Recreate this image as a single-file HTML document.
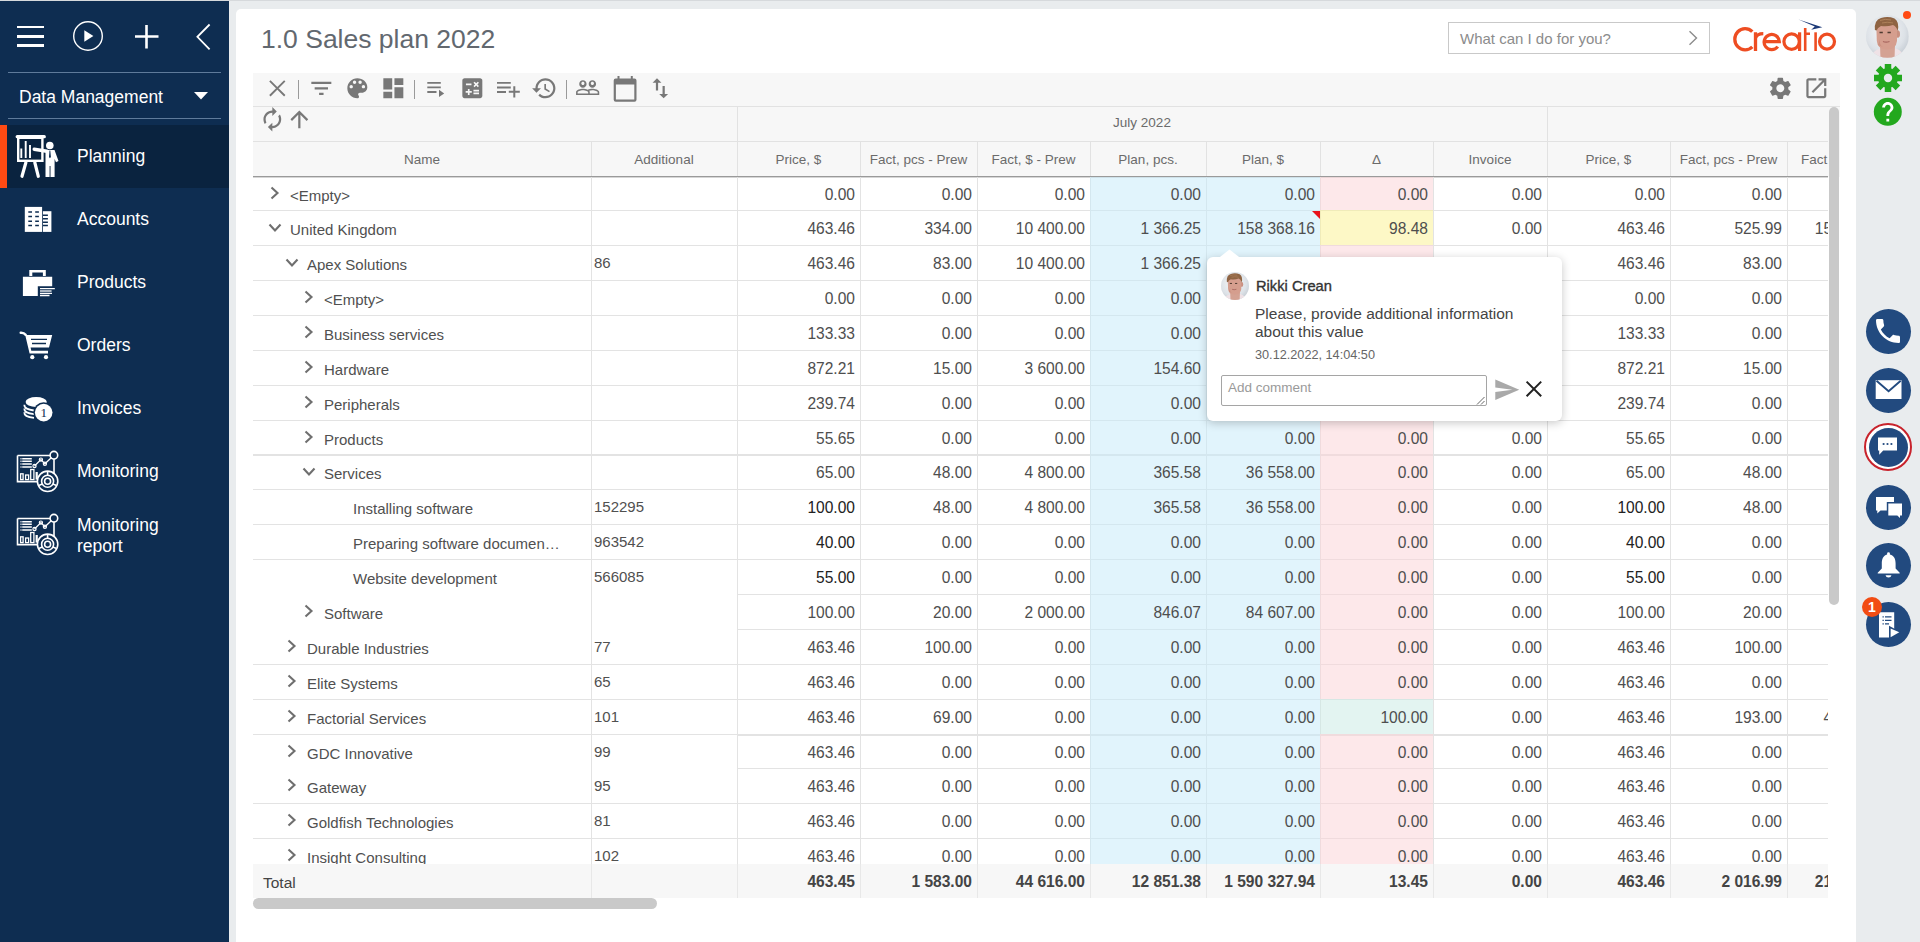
<!DOCTYPE html><html><head><meta charset="utf-8"><style>
*{box-sizing:border-box}
html,body{margin:0;padding:0;width:1920px;height:942px;overflow:hidden;background:#e9ecee;font-family:'Liberation Sans',sans-serif;}
.a{position:absolute}
.t{position:absolute;white-space:nowrap}
#sb{position:absolute;left:0;top:1px;width:229px;height:941px;background:#0e2d51}
.mi{position:absolute;left:77px;color:#fff;font-size:17.5px;white-space:nowrap}
.num{position:absolute;white-space:nowrap;text-align:right;font-size:17px;color:#4e4e4e;transform:scaleX(0.915);transform-origin:100% 50%}
.nm{position:absolute;white-space:nowrap;font-size:15px;color:#505050}
.hd{position:absolute;white-space:nowrap;text-align:center;font-size:13.5px;color:#6b6b6b}
.vl{position:absolute;width:1px;background:#e3e3e3}
.hl{position:absolute;height:1px;background:#e3e3e3}
.rb{position:absolute;left:1866px;width:45px;height:45px;border-radius:50%;background:#224a7f}
</style></head><body>

<div class="a" style="left:0;top:0;width:1920px;height:1px;background:#d6d9dc"></div>
<div id="sb"></div>
<div class="a" style="left:236px;top:9px;width:1620px;height:933px;background:#fff;border-radius:5px 5px 0 0"></div>
<div class="a" style="left:17px;top:25.95px;width:26.5px;height:2.5px;background:#fff"></div>
<div class="a" style="left:17px;top:35.25px;width:26.5px;height:2.5px;background:#fff"></div>
<div class="a" style="left:17px;top:44.25px;width:26.5px;height:2.5px;background:#fff"></div>
<svg class="a" style="left:72px;top:20px" width="32" height="32" viewBox="0 0 32 32"><circle cx="16" cy="16" r="14.3" fill="none" stroke="#fff" stroke-width="1.4"/><path d="M12.3 10.2 L21.4 16 L12.3 21.8Z" fill="#fff"/></svg>
<svg class="a" style="left:134px;top:24px" width="26" height="26" viewBox="0 0 26 26"><path d="M12.5 1 V24.5 M1 12.5 H24.5" stroke="#fff" stroke-width="2.6"/></svg>
<svg class="a" style="left:194px;top:23px" width="18" height="28" viewBox="0 0 18 28"><path d="M15.6 1.5 L3.4 13.8 L15.6 26.3" fill="none" stroke="#fff" stroke-width="1.8"/></svg>
<div class="a" style="left:8px;top:72px;width:213px;height:1px;background:#5f7b9b"></div>
<div class="a" style="left:8px;top:118px;width:213px;height:1px;background:#5f7b9b"></div>
<div class="t" style="left:19px;top:86.5px;color:#fff;font-size:17.5px">Data Management</div>
<svg class="a" style="left:194px;top:92px" width="14" height="8" viewBox="0 0 14 8"><path d="M0 0H14L7 7.5Z" fill="#fff"/></svg>
<div class="a" style="left:0;top:125px;width:229px;height:63px;background:#0a233f"></div>
<div class="a" style="left:0;top:125px;width:7px;height:63px;background:#ff4a13"></div>
<div class="mi" style="top:145.5px">Planning</div>
<div class="mi" style="top:208.5px">Accounts</div>
<div class="mi" style="top:271.5px">Products</div>
<div class="mi" style="top:334.5px">Orders</div>
<div class="mi" style="top:397.5px">Invoices</div>
<div class="mi" style="top:460.5px">Monitoring</div>
<div class="mi" style="top:514.5px;line-height:21px">Monitoring<br>report</div>
<svg class="a" style="left:10px;top:128px" width="52" height="54" viewBox="0 0 52 54">
<path d="M7.2 8.7 H34.3" stroke="#fff" stroke-width="3.2" stroke-linecap="round"/>
<rect x="8.2" y="9.8" width="24.2" height="23" fill="none" stroke="#fff" stroke-width="2.4"/>
<path d="M11.3 20.5V30M15.7 13V30M20 17V30" stroke="#fff" stroke-width="1.9"/>
<path d="M15.9 34.5 L12 48.3 M24.8 34.5 L28.3 48.3" stroke="#fff" stroke-width="3.2" stroke-linecap="round"/>
<circle cx="39.8" cy="17.5" r="3.8" fill="#fff"/>
<path d="M24.2 21.3 L37 23.2" stroke="#fff" stroke-width="3.4" stroke-linecap="round"/>
<path d="M35.5 22 H44.5 L48.5 33 L46 34.3 L44.6 31 V49 H40.5 V38 H39.6 V49 H35.5Z" fill="#fff"/>
<path d="M39.5 22.5 L40.3 22.5 L40.9 29 L39.9 30.3 L39 29Z" fill="#0e2d51"/>
</svg>
<svg class="a" style="left:20px;top:200px" width="36" height="36" viewBox="0 0 36 36">
<rect x="4.8" y="6.9" width="17.3" height="25" fill="#fff"/>
<rect x="22.9" y="11.2" width="8.5" height="20.7" fill="#fff"/>
<path d="M8.3 12.1h3.7M15.2 12.1h3.7M8.3 16.5h3.7M15.2 16.5h3.7M8.3 21.2h3.7M15.2 21.2h3.7M8.3 25.5h3.7M15.2 25.5h3.7M23 15.3h4.9M23 18.8h4.9M23 22.3h4.9M23 25.5h4.9" stroke="#0e2d51" stroke-width="1.5"/>
</svg>
<svg class="a" style="left:20px;top:266px" width="38" height="34" viewBox="0 0 38 34">
<path d="M9.3 4.1 H25.8 V10 H22.9 V6.5 H12.3 V10 H9.3Z" fill="#fff"/>
<path d="M2.9 10.7 H32.2 V20.3 H17.8 V30.1 H2.9Z" fill="#fff"/>
<path d="M20 22.7 H34.8 M20 25 H31.5 M20 27.4 H32 M20 29.5 H29.5" stroke="#fff" stroke-width="1.3"/>
<path d="M20 25 H31" stroke="#9aa8b8" stroke-width="1.2"/>
</svg>
<svg class="a" style="left:18px;top:330px" width="38" height="32" viewBox="0 0 38 32">
<path d="M2.8 2.7 Q6 2.6 7.6 4.7" fill="none" stroke="#fff" stroke-width="2.6" stroke-linecap="round"/>
<path d="M7.2 5.1 H34.2 L31 17.6 H12.6 L13.3 20.8 H30 V23.4 H11.6 Z" fill="#fff"/>
<path d="M13 9.4 H29 M14 13.5 H28" stroke="#0e2d51" stroke-width="1.3"/>
<circle cx="14.3" cy="27.2" r="2.1" fill="#fff"/><circle cx="28" cy="27.2" r="2.1" fill="#fff"/>
</svg>
<svg class="a" style="left:20px;top:390px" width="36" height="36" viewBox="0 0 36 36">
<path d="M4.3 14.8 Q4 19.5 14 20.5 M4.3 18.5 Q4 23.2 14 24.2 M4.3 22.2 Q4 26.9 14 27.9" fill="none" stroke="#fff" stroke-width="1.8"/>
<ellipse cx="16.2" cy="12" rx="10.6" ry="5" fill="#fff"/>
<circle cx="23.7" cy="22.6" r="10.3" fill="#0e2d51"/>
<circle cx="23.7" cy="22.6" r="8.8" fill="#fff"/>
<text x="23.7" y="27.2" font-family="Liberation Serif" font-size="13" text-anchor="middle" fill="#0e2d51">1</text>
</svg>
<svg class="a" style="left:10px;top:445px" width="52" height="56" viewBox="0 0 52 56">
<path d="M7.5 10.5 H40.1 M44 14 V29 M7.5 10.5 V36.6 H27.2" fill="none" stroke="#fff" stroke-width="1.6"/>
<circle cx="43.9" cy="10.2" r="3.8" fill="none" stroke="#fff" stroke-width="1.6"/>
<path d="M10.3 13.7h1.4M10.3 16.2h1.4M10.3 19h1.4M10.3 22h1.4" stroke="#c8d0da" stroke-width="1.6"/>
<path d="M12.2 13.7h9.6M12.2 16.2h9.6M12.2 19h9.6M12.2 22h9.6" stroke="#fff" stroke-width="1.5"/>
<path d="M24.5 21 L30.9 14.6 L34.9 18.8 L41.5 12.5" fill="none" stroke="#fff" stroke-width="1.3"/>
<circle cx="24.5" cy="21" r="1.6" fill="none" stroke="#fff" stroke-width="1.2"/>
<circle cx="30.9" cy="14.6" r="1.6" fill="none" stroke="#fff" stroke-width="1.2"/>
<circle cx="34.9" cy="18.8" r="1.6" fill="none" stroke="#fff" stroke-width="1.2"/>
<rect x="10.6" y="28.8" width="2.5" height="5.8" fill="none" stroke="#fff" stroke-width="1.3"/>
<rect x="15.6" y="30" width="3" height="4.6" fill="none" stroke="#fff" stroke-width="1.3"/>
<rect x="20.7" y="24.5" width="3.2" height="10.1" fill="none" stroke="#fff" stroke-width="1.3"/>
<path d="M26.7 27 V34.6" stroke="#fff" stroke-width="2.2"/>
<circle cx="37.6" cy="36.3" r="10.2" fill="#0e2d51" stroke="#fff" stroke-width="1.6"/>
<circle cx="37.6" cy="36.3" r="6" fill="none" stroke="#fff" stroke-width="1.6"/>
<circle cx="37.6" cy="36.3" r="3" fill="none" stroke="#fff" stroke-width="1.6"/>
<path d="M37.6 26 V30.3 M28.6 40.5 L32.4 39 M46.6 40.5 L42.8 39" stroke="#fff" stroke-width="1.6"/>
</svg>
<svg class="a" style="left:10px;top:508px" width="52" height="56" viewBox="0 0 52 56">
<path d="M7.5 10.5 H40.1 M44 14 V29 M7.5 10.5 V36.6 H27.2" fill="none" stroke="#fff" stroke-width="1.6"/>
<circle cx="43.9" cy="10.2" r="3.8" fill="none" stroke="#fff" stroke-width="1.6"/>
<path d="M10.3 13.7h1.4M10.3 16.2h1.4M10.3 19h1.4M10.3 22h1.4" stroke="#c8d0da" stroke-width="1.6"/>
<path d="M12.2 13.7h9.6M12.2 16.2h9.6M12.2 19h9.6M12.2 22h9.6" stroke="#fff" stroke-width="1.5"/>
<path d="M24.5 21 L30.9 14.6 L34.9 18.8 L41.5 12.5" fill="none" stroke="#fff" stroke-width="1.3"/>
<circle cx="24.5" cy="21" r="1.6" fill="none" stroke="#fff" stroke-width="1.2"/>
<circle cx="30.9" cy="14.6" r="1.6" fill="none" stroke="#fff" stroke-width="1.2"/>
<circle cx="34.9" cy="18.8" r="1.6" fill="none" stroke="#fff" stroke-width="1.2"/>
<rect x="10.6" y="28.8" width="2.5" height="5.8" fill="none" stroke="#fff" stroke-width="1.3"/>
<rect x="15.6" y="30" width="3" height="4.6" fill="none" stroke="#fff" stroke-width="1.3"/>
<rect x="20.7" y="24.5" width="3.2" height="10.1" fill="none" stroke="#fff" stroke-width="1.3"/>
<path d="M26.7 27 V34.6" stroke="#fff" stroke-width="2.2"/>
<circle cx="37.6" cy="36.3" r="10.2" fill="#0e2d51" stroke="#fff" stroke-width="1.6"/>
<circle cx="37.6" cy="36.3" r="6" fill="none" stroke="#fff" stroke-width="1.6"/>
<circle cx="37.6" cy="36.3" r="3" fill="none" stroke="#fff" stroke-width="1.6"/>
<path d="M37.6 26 V30.3 M28.6 40.5 L32.4 39 M46.6 40.5 L42.8 39" stroke="#fff" stroke-width="1.6"/>
</svg>
<div class="t" style="left:261px;top:23.5px;font-size:26.5px;color:#62686f">1.0 Sales plan 2022</div>
<div class="a" style="left:1448px;top:22px;width:262px;height:32px;border:1px solid #c9c9c9;background:#fff"></div>
<div class="t" style="left:1460px;top:29.7px;font-size:15px;color:#8c8c8c">What can I do for you?</div>
<svg class="a" style="left:1687px;top:30px" width="12" height="16" viewBox="0 0 12 16"><path d="M2.5 1.2 L9.5 8 L2.5 14.8" fill="none" stroke="#8c8c8c" stroke-width="1.4"/></svg>
<div class="a" style="left:253px;top:73px;width:1587px;height:104px;background:#f7f7f7"></div>
<div class="a" style="left:253px;top:106px;width:1587px;height:1px;background:#e2e2e2"></div>
<div class="a" style="left:253px;top:141px;width:1575px;height:1px;background:#e2e2e2"></div>
<svg class="a" style="left:263.5px;top:75px" width="26.67" height="26.67" viewBox="0 0 24 24"><path d="M5.3 5.3L18.7 18.7M18.7 5.3L5.3 18.7" stroke="#787878" stroke-width="1.7"/></svg>
<div class="a" style="left:298px;top:80px;width:1px;height:19px;background:#9a9a9a"></div>
<svg class="a" style="left:307.7px;top:75px" width="26.67" height="26.67" viewBox="0 0 24 24"><path fill="#787878" d="M10 18h4v-2h-4v2zM3 6v2h18V6H3zm3 7h12v-2H6v2z"/></svg>
<svg class="a" style="left:343.7px;top:75px" width="26.67" height="26.67" viewBox="0 0 24 24"><path fill="#787878" d="M12 3c-4.97 0-9 4.03-9 9s4.03 9 9 9c.83 0 1.5-.67 1.5-1.5 0-.39-.15-.74-.39-1.01-.23-.26-.38-.61-.38-.99 0-.83.67-1.5 1.5-1.5H16c2.76 0 5-2.24 5-5 0-4.42-4.03-8-9-8zm-5.5 9c-.83 0-1.5-.67-1.5-1.5S5.67 9 6.5 9 8 9.67 8 10.5 7.33 12 6.5 12zm3-4C8.67 8 8 7.33 8 6.5S8.67 5 9.5 5s1.5.67 1.5 1.5S10.33 8 9.5 8zm5 0c-.83 0-1.5-.67-1.5-1.5S13.67 5 14.5 5s1.5.67 1.5 1.5S15.33 8 14.5 8zm3 4c-.83 0-1.5-.67-1.5-1.5S16.67 9 17.5 9s1.5.67 1.5 1.5-.67 1.5-1.5 1.5z"/></svg>
<svg class="a" style="left:379.7px;top:75px" width="26.67" height="26.67" viewBox="0 0 24 24"><path fill="#787878" d="M3 13h8V3H3v10zm0 8h8v-6H3v6zm10 0h8V11h-8v10zm0-18v6h8V3h-8z"/></svg>
<div class="a" style="left:414px;top:80px;width:1px;height:19px;background:#9a9a9a"></div>
<svg class="a" style="left:426px;top:80px" width="20" height="18" viewBox="0 0 20 18"><path fill="#787878" d="M1.3 1.9h13.5v1.8H1.3zM1.3 6.5h13.5v1.8H1.3zM1.3 11.1h9.2v1.8H1.3zM13 9.8v7.2l5.2-3.6z"/></svg>
<svg class="a" style="left:459.2px;top:75px" width="26.67" height="26.67" viewBox="0 0 24 24"><path fill="#787878" d="M19 3H5c-1.1 0-2 .9-2 2v14c0 1.1.9 2 2 2h14c1.1 0 2-.9 2-2V5c0-1.1-.9-2-2-2zm-5.97 4.06L14.09 6l1.41 1.41L16.91 6l1.06 1.06-1.41 1.41 1.41 1.41-1.06 1.06-1.41-1.4-1.41 1.41-1.06-1.06 1.41-1.41-1.41-1.42zm-6.78.66h5v1.5h-5v-1.5zM11.5 16h-2v2H8v-2H6v-1.5h2v-2h1.5v2h2V16zm6.5 1.25h-5v-1.5h5v1.5zm0-2.5h-5v-1.5h5v1.5z"/></svg>
<svg class="a" style="left:496px;top:80px" width="26" height="19" viewBox="0 0 26 19"><path fill="#787878" d="M1 1.9h13.8v1.8H1zM1 6.6h13.8v1.8H1zM1 11.1h9v1.8H1zM17.3 6.2h2v11.2h-2zM12.8 10.8h11v2h-11z"/></svg>
<svg class="a" style="left:530.9px;top:75px" width="26.67" height="26.67" viewBox="0 0 24 24"><path fill="#787878" d="M13 3c-4.97 0-9 4.03-9 9H1l3.89 3.89.07.14L9 12H6c0-3.87 3.13-7 7-7s7 3.13 7 7-3.13 7-7 7c-1.93 0-3.68-.79-4.94-2.06l-1.42 1.42C8.27 19.99 10.51 21 13 21c4.97 0 9-4.03 9-9s-4.03-9-9-9zm-1 5v5l4.28 2.54.72-1.21-3.5-2.08V8H12z"/></svg>
<div class="a" style="left:566px;top:80px;width:1px;height:19px;background:#9a9a9a"></div>
<svg class="a" style="left:574.9px;top:75px" width="25.3" height="25.3" viewBox="0 0 24 24"><path fill="#787878" d="M16.5 13c-1.2 0-3.07.34-4.5 1-1.43-.67-3.3-1-4.5-1C5.33 13 1 14.08 1 16.25V19h22v-2.75c0-2.17-4.33-3.25-6.5-3.25zm-4 4.5h-10v-1.25c0-.54 2.56-1.75 5-1.75s5 1.21 5 1.75v1.25zm9 0H14v-1.25c0-.46-.2-.86-.52-1.22.88-.3 1.96-.53 3.02-.53 2.44 0 5 1.21 5 1.75v1.25zM7.5 12c1.93 0 3.5-1.57 3.5-3.5S9.43 5 7.5 5 4 6.57 4 8.5 5.57 12 7.5 12zm0-5.5c.83 0 1.5.67 1.5 1.5s-.67 1.5-1.5 1.5S6 8.83 6 8s.67-1.5 1.5-1.5zm9 5.5c1.93 0 3.5-1.57 3.5-3.5S18.43 5 16.5 5 13 6.57 13 8.5s1.57 3.5 3.5 3.5zm0-5.5c.83 0 1.5.67 1.5 1.5s-.67 1.5-1.5 1.5S15 8.83 15 8s.67-1.5 1.5-1.5z"/></svg>
<svg class="a" style="left:612px;top:75px" width="26" height="27" viewBox="0 0 26 27"><path fill="#787878" d="M5.5 1h2v3h-2zM18.8 1h2v3h-2zM3.7 3.6h18.8a2 2 0 0 1 2 2v19.2a2 2 0 0 1-2 2H3.7a2 2 0 0 1-2-2V5.6a2 2 0 0 1 2-2zM3.9 9.4v15.2h18.4V9.4z"/></svg>
<svg class="a" style="left:647.25px;top:75px" width="26.67" height="26.67" viewBox="0 0 24 24"><path fill="#787878" d="M16 17.01V10h-2v7.01h-3L15 21l4-3.99h-3zM9 3L5 6.99h3V14h2V6.99h3L9 3z"/></svg>
<svg class="a" style="left:258.8px;top:106px" width="26.67" height="26.67" viewBox="0 0 24 24"><path fill="#787878" d="M12 6v3l4-4-4-4v3c-4.42 0-8 3.58-8 8 0 1.57.46 3.03 1.24 4.26L6.7 14.8c-.45-.83-.7-1.79-.7-2.8 0-3.31 2.69-6 6-6zm6.76 1.74L17.3 9.2c.44.84.7 1.79.7 2.8 0 3.31-2.69 6-6 6v-3l-4 4 4 4v-3c4.42 0 8-3.58 8-8 0-1.57-.46-3.03-1.24-4.26z"/></svg>
<svg class="a" style="left:285.6px;top:106.2px" width="26.67" height="26.67" viewBox="0 0 24 24"><path fill="#787878" d="M4 12l1.41 1.41L11 7.83V20h2V7.83l5.58 5.59L20 12l-8-8-8 8z"/></svg>
<svg class="a" style="left:1767.3px;top:75px" width="26.67" height="26.67" viewBox="0 0 24 24"><path fill="#787878" d="M19.14 12.94c.04-.3.06-.61.06-.94 0-.32-.02-.64-.07-.94l2.03-1.58c.18-.14.23-.41.12-.61l-1.92-3.32c-.12-.22-.37-.29-.59-.22l-2.39.96c-.5-.38-1.03-.7-1.62-.94l-.36-2.54c-.04-.24-.24-.41-.48-.41h-3.84c-.24 0-.43.17-.47.41l-.36 2.54c-.59.24-1.13.57-1.62.94l-2.39-.96c-.22-.08-.47 0-.59.22L2.74 8.87c-.12.21-.08.47.12.61l2.03 1.58c-.05.3-.09.63-.09.94s.02.64.07.94l-2.03 1.58c-.18.14-.23.41-.12.61l1.92 3.32c.12.22.37.29.59.22l2.39-.96c.5.38 1.03.7 1.62.94l.36 2.54c.05.24.24.41.48.41h3.84c.24 0 .44-.17.47-.41l.36-2.54c.59-.24 1.13-.56 1.62-.94l2.39.96c.22.08.47 0 .59-.22l1.92-3.32c.12-.22.07-.47-.12-.61l-2.01-1.58zM12 15.6c-1.98 0-3.6-1.62-3.6-3.6s1.62-3.6 3.6-3.6 3.6 1.62 3.6 3.6-1.62 3.6-3.6 3.6z"/></svg>
<svg class="a" style="left:1802.7px;top:75px" width="26.67" height="26.67" viewBox="0 0 24 24"><path fill="#787878" d="M19 19H5V5h7V3H5c-1.11 0-2 .9-2 2v14c0 1.1.89 2 2 2h14c1.1 0 2-.9 2-2v-7h-2v7zM14 3v2h3.59l-9.83 9.83 1.41 1.41L19 6.41V10h2V3h-7z"/></svg>
<div class="hd" style="left:737px;top:115px;width:810px">July 2022</div>
<div class="hd" style="left:253px;top:151.5px;width:338px">Name</div>
<div class="hd" style="left:591px;top:151.5px;width:146px">Additional</div>
<div class="hd" style="left:737px;top:151.5px;width:123px">Price, $</div>
<div class="hd" style="left:860px;top:151.5px;width:117px">Fact, pcs - Prew</div>
<div class="hd" style="left:977px;top:151.5px;width:113px">Fact, $ - Prew</div>
<div class="hd" style="left:1090px;top:151.5px;width:116px">Plan, pcs.</div>
<div class="hd" style="left:1206px;top:151.5px;width:114px">Plan, $</div>
<div class="hd" style="left:1320px;top:151.5px;width:113px">&Delta;</div>
<div class="hd" style="left:1433px;top:151.5px;width:114px">Invoice</div>
<div class="hd" style="left:1547px;top:151.5px;width:123px">Price, $</div>
<div class="hd" style="left:1670px;top:151.5px;width:117px">Fact, pcs - Prew</div>
<div class="t" style="left:1801px;top:151.5px;font-size:13.5px;color:#6b6b6b;width:27px;overflow:hidden">Fact</div>
<div class="vl" style="left:591px;top:141px;height:35px;background:#e2e2e2"></div>
<div class="vl" style="left:737px;top:141px;height:35px;background:#e2e2e2"></div>
<div class="vl" style="left:860px;top:141px;height:35px;background:#e2e2e2"></div>
<div class="vl" style="left:977px;top:141px;height:35px;background:#e2e2e2"></div>
<div class="vl" style="left:1090px;top:141px;height:35px;background:#e2e2e2"></div>
<div class="vl" style="left:1206px;top:141px;height:35px;background:#e2e2e2"></div>
<div class="vl" style="left:1320px;top:141px;height:35px;background:#e2e2e2"></div>
<div class="vl" style="left:1433px;top:141px;height:35px;background:#e2e2e2"></div>
<div class="vl" style="left:1547px;top:141px;height:35px;background:#e2e2e2"></div>
<div class="vl" style="left:1670px;top:141px;height:35px;background:#e2e2e2"></div>
<div class="vl" style="left:1787px;top:141px;height:35px;background:#e2e2e2"></div>
<div class="vl" style="left:737px;top:106px;height:35px;background:#e2e2e2"></div>
<div class="vl" style="left:1547px;top:106px;height:35px;background:#e2e2e2"></div>
<div class="a" style="left:253px;top:176px;width:1575px;height:1px;background:#9a9a9a"></div><div class="a" style="left:253px;top:177px;width:1575px;height:1px;background:#d6d6d6"></div>
<div class="a" style="left:253px;top:177px;width:1575px;height:687px;overflow:hidden">
<div class="hl" style="left:0;top:33px;width:484px;height:1px"></div>
<div class="hl" style="left:484px;top:33px;width:1091px;height:1px"></div>
<div class="hl" style="left:0;top:68px;width:484px;height:1px"></div>
<div class="hl" style="left:484px;top:68px;width:1091px;height:1px"></div>
<div class="hl" style="left:0;top:103px;width:484px;height:1px"></div>
<div class="hl" style="left:484px;top:103px;width:1091px;height:1px"></div>
<div class="hl" style="left:0;top:138px;width:484px;height:1px"></div>
<div class="hl" style="left:484px;top:138px;width:1091px;height:1px"></div>
<div class="hl" style="left:0;top:173px;width:484px;height:1px"></div>
<div class="hl" style="left:484px;top:173px;width:1091px;height:1px"></div>
<div class="hl" style="left:0;top:208px;width:484px;height:1px"></div>
<div class="hl" style="left:484px;top:208px;width:1091px;height:1px"></div>
<div class="hl" style="left:0;top:243px;width:484px;height:1px"></div>
<div class="hl" style="left:484px;top:243px;width:1091px;height:1px"></div>
<div class="hl" style="left:0;top:277px;width:484px;height:2px"></div>
<div class="hl" style="left:484px;top:277px;width:1091px;height:2px"></div>
<div class="hl" style="left:0;top:312px;width:484px;height:1px"></div>
<div class="hl" style="left:484px;top:312px;width:1091px;height:1px"></div>
<div class="hl" style="left:0;top:347px;width:484px;height:1px"></div>
<div class="hl" style="left:484px;top:347px;width:1091px;height:1px"></div>
<div class="hl" style="left:0;top:382px;width:484px;height:1px"></div>
<div class="hl" style="left:484px;top:382px;width:1091px;height:1px"></div>
<div class="hl" style="left:484px;top:417px;width:1091px;height:1px"></div>
<div class="hl" style="left:484px;top:452px;width:1091px;height:1px"></div>
<div class="hl" style="left:0;top:487px;width:484px;height:1px"></div>
<div class="hl" style="left:484px;top:487px;width:1091px;height:1px"></div>
<div class="hl" style="left:0;top:522px;width:484px;height:1px"></div>
<div class="hl" style="left:484px;top:522px;width:1091px;height:1px"></div>
<div class="hl" style="left:0;top:557px;width:484px;height:1px"></div>
<div class="hl" style="left:484px;top:557px;width:1091px;height:2px"></div>
<div class="hl" style="left:484px;top:591px;width:1091px;height:1px"></div>
<div class="hl" style="left:0;top:626px;width:484px;height:1px"></div>
<div class="hl" style="left:484px;top:626px;width:1091px;height:1px"></div>
<div class="hl" style="left:0;top:661px;width:484px;height:1px"></div>
<div class="hl" style="left:484px;top:661px;width:1091px;height:1px"></div>
<div class="hl" style="left:0;top:696px;width:484px;height:1px"></div>
<div class="hl" style="left:484px;top:696px;width:1091px;height:1px"></div>
<div class="vl" style="left:338px;top:0;height:700px"></div>
<div class="vl" style="left:484px;top:0;height:700px"></div>
<div class="vl" style="left:607px;top:0;height:700px"></div>
<div class="vl" style="left:724px;top:0;height:700px"></div>
<div class="vl" style="left:837px;top:0;height:700px"></div>
<div class="vl" style="left:953px;top:0;height:700px"></div>
<div class="vl" style="left:1067px;top:0;height:700px"></div>
<div class="vl" style="left:1180px;top:0;height:700px"></div>
<div class="vl" style="left:1294px;top:0;height:700px"></div>
<div class="vl" style="left:1417px;top:0;height:700px"></div>
<div class="vl" style="left:1534px;top:0;height:700px"></div>
<div class="a" style="left:837px;top:-1px;width:116px;height:34px;background:rgba(200,235,250,0.55)"></div>
<div class="a" style="left:953px;top:-1px;width:114px;height:34px;background:rgba(200,235,250,0.55)"></div>
<div class="a" style="left:1067px;top:-1px;width:113px;height:34px;background:rgba(251,213,217,0.55)"></div>
<div class="a" style="left:837px;top:33px;width:116px;height:35px;background:rgba(200,235,250,0.55)"></div>
<div class="a" style="left:953px;top:33px;width:114px;height:35px;background:rgba(200,235,250,0.55)"></div>
<div class="a" style="left:1067px;top:33px;width:113px;height:35px;background:rgba(251,242,151,0.55)"></div>
<div class="a" style="left:837px;top:68px;width:116px;height:35px;background:rgba(200,235,250,0.55)"></div>
<div class="a" style="left:953px;top:68px;width:114px;height:35px;background:rgba(200,235,250,0.55)"></div>
<div class="a" style="left:1067px;top:68px;width:113px;height:35px;background:rgba(251,213,217,0.55)"></div>
<div class="a" style="left:837px;top:103px;width:116px;height:35px;background:rgba(200,235,250,0.55)"></div>
<div class="a" style="left:953px;top:103px;width:114px;height:35px;background:rgba(200,235,250,0.55)"></div>
<div class="a" style="left:1067px;top:103px;width:113px;height:35px;background:rgba(251,213,217,0.55)"></div>
<div class="a" style="left:837px;top:138px;width:116px;height:35px;background:rgba(200,235,250,0.55)"></div>
<div class="a" style="left:953px;top:138px;width:114px;height:35px;background:rgba(200,235,250,0.55)"></div>
<div class="a" style="left:1067px;top:138px;width:113px;height:35px;background:rgba(251,213,217,0.55)"></div>
<div class="a" style="left:837px;top:173px;width:116px;height:35px;background:rgba(200,235,250,0.55)"></div>
<div class="a" style="left:953px;top:173px;width:114px;height:35px;background:rgba(200,235,250,0.55)"></div>
<div class="a" style="left:1067px;top:173px;width:113px;height:35px;background:rgba(251,213,217,0.55)"></div>
<div class="a" style="left:837px;top:208px;width:116px;height:35px;background:rgba(200,235,250,0.55)"></div>
<div class="a" style="left:953px;top:208px;width:114px;height:35px;background:rgba(200,235,250,0.55)"></div>
<div class="a" style="left:1067px;top:208px;width:113px;height:35px;background:rgba(251,213,217,0.55)"></div>
<div class="a" style="left:837px;top:243px;width:116px;height:34px;background:rgba(200,235,250,0.55)"></div>
<div class="a" style="left:953px;top:243px;width:114px;height:34px;background:rgba(200,235,250,0.55)"></div>
<div class="a" style="left:1067px;top:243px;width:113px;height:34px;background:rgba(251,213,217,0.55)"></div>
<div class="a" style="left:837px;top:277px;width:116px;height:35px;background:rgba(200,235,250,0.55)"></div>
<div class="a" style="left:953px;top:277px;width:114px;height:35px;background:rgba(200,235,250,0.55)"></div>
<div class="a" style="left:1067px;top:277px;width:113px;height:35px;background:rgba(251,213,217,0.55)"></div>
<div class="a" style="left:837px;top:312px;width:116px;height:35px;background:rgba(200,235,250,0.55)"></div>
<div class="a" style="left:953px;top:312px;width:114px;height:35px;background:rgba(200,235,250,0.55)"></div>
<div class="a" style="left:1067px;top:312px;width:113px;height:35px;background:rgba(251,213,217,0.55)"></div>
<div class="a" style="left:837px;top:347px;width:116px;height:35px;background:rgba(200,235,250,0.55)"></div>
<div class="a" style="left:953px;top:347px;width:114px;height:35px;background:rgba(200,235,250,0.55)"></div>
<div class="a" style="left:1067px;top:347px;width:113px;height:35px;background:rgba(251,213,217,0.55)"></div>
<div class="a" style="left:837px;top:382px;width:116px;height:35px;background:rgba(200,235,250,0.55)"></div>
<div class="a" style="left:953px;top:382px;width:114px;height:35px;background:rgba(200,235,250,0.55)"></div>
<div class="a" style="left:1067px;top:382px;width:113px;height:35px;background:rgba(251,213,217,0.55)"></div>
<div class="a" style="left:837px;top:417px;width:116px;height:35px;background:rgba(200,235,250,0.55)"></div>
<div class="a" style="left:953px;top:417px;width:114px;height:35px;background:rgba(200,235,250,0.55)"></div>
<div class="a" style="left:1067px;top:417px;width:113px;height:35px;background:rgba(251,213,217,0.55)"></div>
<div class="a" style="left:837px;top:452px;width:116px;height:35px;background:rgba(200,235,250,0.55)"></div>
<div class="a" style="left:953px;top:452px;width:114px;height:35px;background:rgba(200,235,250,0.55)"></div>
<div class="a" style="left:1067px;top:452px;width:113px;height:35px;background:rgba(251,213,217,0.55)"></div>
<div class="a" style="left:837px;top:487px;width:116px;height:35px;background:rgba(200,235,250,0.55)"></div>
<div class="a" style="left:953px;top:487px;width:114px;height:35px;background:rgba(200,235,250,0.55)"></div>
<div class="a" style="left:1067px;top:487px;width:113px;height:35px;background:rgba(251,213,217,0.55)"></div>
<div class="a" style="left:837px;top:522px;width:116px;height:35px;background:rgba(200,235,250,0.55)"></div>
<div class="a" style="left:953px;top:522px;width:114px;height:35px;background:rgba(200,235,250,0.55)"></div>
<div class="a" style="left:1067px;top:522px;width:113px;height:35px;background:rgba(204,235,230,0.55)"></div>
<div class="a" style="left:837px;top:557px;width:116px;height:34px;background:rgba(200,235,250,0.55)"></div>
<div class="a" style="left:953px;top:557px;width:114px;height:34px;background:rgba(200,235,250,0.55)"></div>
<div class="a" style="left:1067px;top:557px;width:113px;height:34px;background:rgba(251,213,217,0.55)"></div>
<div class="a" style="left:837px;top:591px;width:116px;height:35px;background:rgba(200,235,250,0.55)"></div>
<div class="a" style="left:953px;top:591px;width:114px;height:35px;background:rgba(200,235,250,0.55)"></div>
<div class="a" style="left:1067px;top:591px;width:113px;height:35px;background:rgba(251,213,217,0.55)"></div>
<div class="a" style="left:837px;top:626px;width:116px;height:35px;background:rgba(200,235,250,0.55)"></div>
<div class="a" style="left:953px;top:626px;width:114px;height:35px;background:rgba(200,235,250,0.55)"></div>
<div class="a" style="left:1067px;top:626px;width:113px;height:35px;background:rgba(251,213,217,0.55)"></div>
<div class="a" style="left:837px;top:661px;width:116px;height:35px;background:rgba(200,235,250,0.55)"></div>
<div class="a" style="left:953px;top:661px;width:114px;height:35px;background:rgba(200,235,250,0.55)"></div>
<div class="a" style="left:1067px;top:661px;width:113px;height:35px;background:rgba(251,213,217,0.55)"></div>
<svg class="a" style="left:17px;top:8.599999999999994px" width="10" height="14" viewBox="0 0 10 14"><path d="M1.5 1.5 L7.5 7 L1.5 12.5" fill="none" stroke="#6f6f6f" stroke-width="2.1"/></svg>
<div class="nm" style="left:37px;top:9.599999999999994px">&lt;Empty&gt;</div>
<div class="num" style="left:484px;top:7.5px;width:118px">0.00</div>
<div class="num" style="left:607px;top:7.5px;width:112px">0.00</div>
<div class="num" style="left:724px;top:7.5px;width:108px">0.00</div>
<div class="num" style="left:837px;top:7.5px;width:111px">0.00</div>
<div class="num" style="left:953px;top:7.5px;width:109px">0.00</div>
<div class="num" style="left:1067px;top:7.5px;width:108px">0.00</div>
<div class="num" style="left:1180px;top:7.5px;width:109px">0.00</div>
<div class="num" style="left:1294px;top:7.5px;width:118px">0.00</div>
<div class="num" style="left:1417px;top:7.5px;width:112px">0.00</div>
<svg class="a" style="left:15px;top:45.69999999999999px" width="14" height="10" viewBox="0 0 14 10"><path d="M1.5 1.5 L7 7.5 L12.5 1.5" fill="none" stroke="#6f6f6f" stroke-width="2.1"/></svg>
<div class="nm" style="left:37px;top:44.099999999999994px">United Kingdom</div>
<div class="num" style="left:484px;top:42.0px;width:118px">463.46</div>
<div class="num" style="left:607px;top:42.0px;width:112px">334.00</div>
<div class="num" style="left:724px;top:42.0px;width:108px">10 400.00</div>
<div class="num" style="left:837px;top:42.0px;width:111px">1 366.25</div>
<div class="num" style="left:953px;top:42.0px;width:109px">158 368.16</div>
<div class="num" style="left:1067px;top:42.0px;width:108px">98.48</div>
<div class="num" style="left:1180px;top:42.0px;width:109px">0.00</div>
<div class="num" style="left:1294px;top:42.0px;width:118px">463.46</div>
<div class="num" style="left:1417px;top:42.0px;width:112px">525.99</div>
<div class="num" style="left:1534px;top:42.0px;width:97px">15 880.00</div>
<svg class="a" style="left:32px;top:80.69999999999999px" width="14" height="10" viewBox="0 0 14 10"><path d="M1.5 1.5 L7 7.5 L12.5 1.5" fill="none" stroke="#6f6f6f" stroke-width="2.1"/></svg>
<div class="nm" style="left:54px;top:79.10000000000002px">Apex Solutions</div>
<div class="nm" style="left:341px;top:77.1px">86</div>
<div class="num" style="left:484px;top:77.0px;width:118px">463.46</div>
<div class="num" style="left:607px;top:77.0px;width:112px">83.00</div>
<div class="num" style="left:724px;top:77.0px;width:108px">10 400.00</div>
<div class="num" style="left:837px;top:77.0px;width:111px">1 366.25</div>
<div class="num" style="left:1294px;top:77.0px;width:118px">463.46</div>
<div class="num" style="left:1417px;top:77.0px;width:112px">83.00</div>
<svg class="a" style="left:51px;top:113.10000000000002px" width="10" height="14" viewBox="0 0 10 14"><path d="M1.5 1.5 L7.5 7 L1.5 12.5" fill="none" stroke="#6f6f6f" stroke-width="2.1"/></svg>
<div class="nm" style="left:71px;top:114.10000000000002px">&lt;Empty&gt;</div>
<div class="num" style="left:484px;top:112.0px;width:118px">0.00</div>
<div class="num" style="left:607px;top:112.0px;width:112px">0.00</div>
<div class="num" style="left:724px;top:112.0px;width:108px">0.00</div>
<div class="num" style="left:837px;top:112.0px;width:111px">0.00</div>
<div class="num" style="left:1294px;top:112.0px;width:118px">0.00</div>
<div class="num" style="left:1417px;top:112.0px;width:112px">0.00</div>
<svg class="a" style="left:51px;top:148.10000000000002px" width="10" height="14" viewBox="0 0 10 14"><path d="M1.5 1.5 L7.5 7 L1.5 12.5" fill="none" stroke="#6f6f6f" stroke-width="2.1"/></svg>
<div class="nm" style="left:71px;top:149.10000000000002px">Business services</div>
<div class="num" style="left:484px;top:147.0px;width:118px">133.33</div>
<div class="num" style="left:607px;top:147.0px;width:112px">0.00</div>
<div class="num" style="left:724px;top:147.0px;width:108px">0.00</div>
<div class="num" style="left:837px;top:147.0px;width:111px">0.00</div>
<div class="num" style="left:1294px;top:147.0px;width:118px">133.33</div>
<div class="num" style="left:1417px;top:147.0px;width:112px">0.00</div>
<svg class="a" style="left:51px;top:183.10000000000002px" width="10" height="14" viewBox="0 0 10 14"><path d="M1.5 1.5 L7.5 7 L1.5 12.5" fill="none" stroke="#6f6f6f" stroke-width="2.1"/></svg>
<div class="nm" style="left:71px;top:184.10000000000002px">Hardware</div>
<div class="num" style="left:484px;top:182.0px;width:118px">872.21</div>
<div class="num" style="left:607px;top:182.0px;width:112px">15.00</div>
<div class="num" style="left:724px;top:182.0px;width:108px">3 600.00</div>
<div class="num" style="left:837px;top:182.0px;width:111px">154.60</div>
<div class="num" style="left:1294px;top:182.0px;width:118px">872.21</div>
<div class="num" style="left:1417px;top:182.0px;width:112px">15.00</div>
<svg class="a" style="left:51px;top:218.10000000000002px" width="10" height="14" viewBox="0 0 10 14"><path d="M1.5 1.5 L7.5 7 L1.5 12.5" fill="none" stroke="#6f6f6f" stroke-width="2.1"/></svg>
<div class="nm" style="left:71px;top:219.10000000000002px">Peripherals</div>
<div class="num" style="left:484px;top:217.0px;width:118px">239.74</div>
<div class="num" style="left:607px;top:217.0px;width:112px">0.00</div>
<div class="num" style="left:724px;top:217.0px;width:108px">0.00</div>
<div class="num" style="left:837px;top:217.0px;width:111px">0.00</div>
<div class="num" style="left:1294px;top:217.0px;width:118px">239.74</div>
<div class="num" style="left:1417px;top:217.0px;width:112px">0.00</div>
<svg class="a" style="left:51px;top:252.60000000000002px" width="10" height="14" viewBox="0 0 10 14"><path d="M1.5 1.5 L7.5 7 L1.5 12.5" fill="none" stroke="#6f6f6f" stroke-width="2.1"/></svg>
<div class="nm" style="left:71px;top:253.60000000000002px">Products</div>
<div class="num" style="left:484px;top:251.5px;width:118px">55.65</div>
<div class="num" style="left:607px;top:251.5px;width:112px">0.00</div>
<div class="num" style="left:724px;top:251.5px;width:108px">0.00</div>
<div class="num" style="left:837px;top:251.5px;width:111px">0.00</div>
<div class="num" style="left:953px;top:251.5px;width:109px">0.00</div>
<div class="num" style="left:1067px;top:251.5px;width:108px">0.00</div>
<div class="num" style="left:1180px;top:251.5px;width:109px">0.00</div>
<div class="num" style="left:1294px;top:251.5px;width:118px">55.65</div>
<div class="num" style="left:1417px;top:251.5px;width:112px">0.00</div>
<svg class="a" style="left:49px;top:289.7px" width="14" height="10" viewBox="0 0 14 10"><path d="M1.5 1.5 L7 7.5 L12.5 1.5" fill="none" stroke="#6f6f6f" stroke-width="2.1"/></svg>
<div class="nm" style="left:71px;top:288.1px">Services</div>
<div class="num" style="left:484px;top:286.0px;width:118px">65.00</div>
<div class="num" style="left:607px;top:286.0px;width:112px">48.00</div>
<div class="num" style="left:724px;top:286.0px;width:108px">4 800.00</div>
<div class="num" style="left:837px;top:286.0px;width:111px">365.58</div>
<div class="num" style="left:953px;top:286.0px;width:109px">36 558.00</div>
<div class="num" style="left:1067px;top:286.0px;width:108px">0.00</div>
<div class="num" style="left:1180px;top:286.0px;width:109px">0.00</div>
<div class="num" style="left:1294px;top:286.0px;width:118px">65.00</div>
<div class="num" style="left:1417px;top:286.0px;width:112px">48.00</div>
<div class="nm" style="left:100px;top:323.1px">Installing software</div>
<div class="nm" style="left:341px;top:321.1px">152295</div>
<div class="num" style="left:484px;top:321.0px;width:118px;color:#222">100.00</div>
<div class="num" style="left:607px;top:321.0px;width:112px">48.00</div>
<div class="num" style="left:724px;top:321.0px;width:108px">4 800.00</div>
<div class="num" style="left:837px;top:321.0px;width:111px">365.58</div>
<div class="num" style="left:953px;top:321.0px;width:109px">36 558.00</div>
<div class="num" style="left:1067px;top:321.0px;width:108px">0.00</div>
<div class="num" style="left:1180px;top:321.0px;width:109px">0.00</div>
<div class="num" style="left:1294px;top:321.0px;width:118px;color:#222">100.00</div>
<div class="num" style="left:1417px;top:321.0px;width:112px">48.00</div>
<div class="nm" style="left:100px;top:358.1px">Preparing software documen…</div>
<div class="nm" style="left:341px;top:356.1px">963542</div>
<div class="num" style="left:484px;top:356.0px;width:118px;color:#222">40.00</div>
<div class="num" style="left:607px;top:356.0px;width:112px">0.00</div>
<div class="num" style="left:724px;top:356.0px;width:108px">0.00</div>
<div class="num" style="left:837px;top:356.0px;width:111px">0.00</div>
<div class="num" style="left:953px;top:356.0px;width:109px">0.00</div>
<div class="num" style="left:1067px;top:356.0px;width:108px">0.00</div>
<div class="num" style="left:1180px;top:356.0px;width:109px">0.00</div>
<div class="num" style="left:1294px;top:356.0px;width:118px;color:#222">40.00</div>
<div class="num" style="left:1417px;top:356.0px;width:112px">0.00</div>
<div class="nm" style="left:100px;top:393.1px">Website development</div>
<div class="nm" style="left:341px;top:391.1px">566085</div>
<div class="num" style="left:484px;top:391.0px;width:118px;color:#222">55.00</div>
<div class="num" style="left:607px;top:391.0px;width:112px">0.00</div>
<div class="num" style="left:724px;top:391.0px;width:108px">0.00</div>
<div class="num" style="left:837px;top:391.0px;width:111px">0.00</div>
<div class="num" style="left:953px;top:391.0px;width:109px">0.00</div>
<div class="num" style="left:1067px;top:391.0px;width:108px">0.00</div>
<div class="num" style="left:1180px;top:391.0px;width:109px">0.00</div>
<div class="num" style="left:1294px;top:391.0px;width:118px;color:#222">55.00</div>
<div class="num" style="left:1417px;top:391.0px;width:112px">0.00</div>
<svg class="a" style="left:51px;top:427.1px" width="10" height="14" viewBox="0 0 10 14"><path d="M1.5 1.5 L7.5 7 L1.5 12.5" fill="none" stroke="#6f6f6f" stroke-width="2.1"/></svg>
<div class="nm" style="left:71px;top:428.1px">Software</div>
<div class="num" style="left:484px;top:426.0px;width:118px">100.00</div>
<div class="num" style="left:607px;top:426.0px;width:112px">20.00</div>
<div class="num" style="left:724px;top:426.0px;width:108px">2 000.00</div>
<div class="num" style="left:837px;top:426.0px;width:111px">846.07</div>
<div class="num" style="left:953px;top:426.0px;width:109px">84 607.00</div>
<div class="num" style="left:1067px;top:426.0px;width:108px">0.00</div>
<div class="num" style="left:1180px;top:426.0px;width:109px">0.00</div>
<div class="num" style="left:1294px;top:426.0px;width:118px">100.00</div>
<div class="num" style="left:1417px;top:426.0px;width:112px">20.00</div>
<svg class="a" style="left:34px;top:462.1px" width="10" height="14" viewBox="0 0 10 14"><path d="M1.5 1.5 L7.5 7 L1.5 12.5" fill="none" stroke="#6f6f6f" stroke-width="2.1"/></svg>
<div class="nm" style="left:54px;top:463.1px">Durable Industries</div>
<div class="nm" style="left:341px;top:461.1px">77</div>
<div class="num" style="left:484px;top:461.0px;width:118px">463.46</div>
<div class="num" style="left:607px;top:461.0px;width:112px">100.00</div>
<div class="num" style="left:724px;top:461.0px;width:108px">0.00</div>
<div class="num" style="left:837px;top:461.0px;width:111px">0.00</div>
<div class="num" style="left:953px;top:461.0px;width:109px">0.00</div>
<div class="num" style="left:1067px;top:461.0px;width:108px">0.00</div>
<div class="num" style="left:1180px;top:461.0px;width:109px">0.00</div>
<div class="num" style="left:1294px;top:461.0px;width:118px">463.46</div>
<div class="num" style="left:1417px;top:461.0px;width:112px">100.00</div>
<svg class="a" style="left:34px;top:497.1px" width="10" height="14" viewBox="0 0 10 14"><path d="M1.5 1.5 L7.5 7 L1.5 12.5" fill="none" stroke="#6f6f6f" stroke-width="2.1"/></svg>
<div class="nm" style="left:54px;top:498.1px">Elite Systems</div>
<div class="nm" style="left:341px;top:496.1px">65</div>
<div class="num" style="left:484px;top:496.0px;width:118px">463.46</div>
<div class="num" style="left:607px;top:496.0px;width:112px">0.00</div>
<div class="num" style="left:724px;top:496.0px;width:108px">0.00</div>
<div class="num" style="left:837px;top:496.0px;width:111px">0.00</div>
<div class="num" style="left:953px;top:496.0px;width:109px">0.00</div>
<div class="num" style="left:1067px;top:496.0px;width:108px">0.00</div>
<div class="num" style="left:1180px;top:496.0px;width:109px">0.00</div>
<div class="num" style="left:1294px;top:496.0px;width:118px">463.46</div>
<div class="num" style="left:1417px;top:496.0px;width:112px">0.00</div>
<svg class="a" style="left:34px;top:532.1px" width="10" height="14" viewBox="0 0 10 14"><path d="M1.5 1.5 L7.5 7 L1.5 12.5" fill="none" stroke="#6f6f6f" stroke-width="2.1"/></svg>
<div class="nm" style="left:54px;top:533.1px">Factorial Services</div>
<div class="nm" style="left:341px;top:531.1px">101</div>
<div class="num" style="left:484px;top:531.0px;width:118px">463.46</div>
<div class="num" style="left:607px;top:531.0px;width:112px">69.00</div>
<div class="num" style="left:724px;top:531.0px;width:108px">0.00</div>
<div class="num" style="left:837px;top:531.0px;width:111px">0.00</div>
<div class="num" style="left:953px;top:531.0px;width:109px">0.00</div>
<div class="num" style="left:1067px;top:531.0px;width:108px">100.00</div>
<div class="num" style="left:1180px;top:531.0px;width:109px">0.00</div>
<div class="num" style="left:1294px;top:531.0px;width:118px">463.46</div>
<div class="num" style="left:1417px;top:531.0px;width:112px">193.00</div>
<div class="num" style="left:1534px;top:531.0px;width:97px">4 800.00</div>
<svg class="a" style="left:34px;top:566.6px" width="10" height="14" viewBox="0 0 10 14"><path d="M1.5 1.5 L7.5 7 L1.5 12.5" fill="none" stroke="#6f6f6f" stroke-width="2.1"/></svg>
<div class="nm" style="left:54px;top:567.6px">GDC Innovative</div>
<div class="nm" style="left:341px;top:565.6px">99</div>
<div class="num" style="left:484px;top:565.5px;width:118px">463.46</div>
<div class="num" style="left:607px;top:565.5px;width:112px">0.00</div>
<div class="num" style="left:724px;top:565.5px;width:108px">0.00</div>
<div class="num" style="left:837px;top:565.5px;width:111px">0.00</div>
<div class="num" style="left:953px;top:565.5px;width:109px">0.00</div>
<div class="num" style="left:1067px;top:565.5px;width:108px">0.00</div>
<div class="num" style="left:1180px;top:565.5px;width:109px">0.00</div>
<div class="num" style="left:1294px;top:565.5px;width:118px">463.46</div>
<div class="num" style="left:1417px;top:565.5px;width:112px">0.00</div>
<svg class="a" style="left:34px;top:601.1px" width="10" height="14" viewBox="0 0 10 14"><path d="M1.5 1.5 L7.5 7 L1.5 12.5" fill="none" stroke="#6f6f6f" stroke-width="2.1"/></svg>
<div class="nm" style="left:54px;top:602.1px">Gateway</div>
<div class="nm" style="left:341px;top:600.1px">95</div>
<div class="num" style="left:484px;top:600.0px;width:118px">463.46</div>
<div class="num" style="left:607px;top:600.0px;width:112px">0.00</div>
<div class="num" style="left:724px;top:600.0px;width:108px">0.00</div>
<div class="num" style="left:837px;top:600.0px;width:111px">0.00</div>
<div class="num" style="left:953px;top:600.0px;width:109px">0.00</div>
<div class="num" style="left:1067px;top:600.0px;width:108px">0.00</div>
<div class="num" style="left:1180px;top:600.0px;width:109px">0.00</div>
<div class="num" style="left:1294px;top:600.0px;width:118px">463.46</div>
<div class="num" style="left:1417px;top:600.0px;width:112px">0.00</div>
<svg class="a" style="left:34px;top:636.1px" width="10" height="14" viewBox="0 0 10 14"><path d="M1.5 1.5 L7.5 7 L1.5 12.5" fill="none" stroke="#6f6f6f" stroke-width="2.1"/></svg>
<div class="nm" style="left:54px;top:637.1px">Goldfish Technologies</div>
<div class="nm" style="left:341px;top:635.1px">81</div>
<div class="num" style="left:484px;top:635.0px;width:118px">463.46</div>
<div class="num" style="left:607px;top:635.0px;width:112px">0.00</div>
<div class="num" style="left:724px;top:635.0px;width:108px">0.00</div>
<div class="num" style="left:837px;top:635.0px;width:111px">0.00</div>
<div class="num" style="left:953px;top:635.0px;width:109px">0.00</div>
<div class="num" style="left:1067px;top:635.0px;width:108px">0.00</div>
<div class="num" style="left:1180px;top:635.0px;width:109px">0.00</div>
<div class="num" style="left:1294px;top:635.0px;width:118px">463.46</div>
<div class="num" style="left:1417px;top:635.0px;width:112px">0.00</div>
<svg class="a" style="left:34px;top:671.1px" width="10" height="14" viewBox="0 0 10 14"><path d="M1.5 1.5 L7.5 7 L1.5 12.5" fill="none" stroke="#6f6f6f" stroke-width="2.1"/></svg>
<div class="nm" style="left:54px;top:672.1px">Insight Consulting</div>
<div class="nm" style="left:341px;top:670.1px">102</div>
<div class="num" style="left:484px;top:670.0px;width:118px">463.46</div>
<div class="num" style="left:607px;top:670.0px;width:112px">0.00</div>
<div class="num" style="left:724px;top:670.0px;width:108px">0.00</div>
<div class="num" style="left:837px;top:670.0px;width:111px">0.00</div>
<div class="num" style="left:953px;top:670.0px;width:109px">0.00</div>
<div class="num" style="left:1067px;top:670.0px;width:108px">0.00</div>
<div class="num" style="left:1180px;top:670.0px;width:109px">0.00</div>
<div class="num" style="left:1294px;top:670.0px;width:118px">463.46</div>
<div class="num" style="left:1417px;top:670.0px;width:112px">0.00</div>
</div>
<div class="a" style="left:253px;top:864px;width:1575px;height:34px;background:#f7f7f7"></div>
<div class="t" style="left:263px;top:874px;font-size:15.5px;color:#444">Total</div>
<div class="num" style="left:737px;top:871.5px;width:118px;font-weight:bold;color:#444">463.45</div>
<div class="num" style="left:860px;top:871.5px;width:112px;font-weight:bold;color:#444">1 583.00</div>
<div class="num" style="left:977px;top:871.5px;width:108px;font-weight:bold;color:#444">44 616.00</div>
<div class="num" style="left:1090px;top:871.5px;width:111px;font-weight:bold;color:#444">12 851.38</div>
<div class="num" style="left:1206px;top:871.5px;width:109px;font-weight:bold;color:#444">1 590 327.94</div>
<div class="num" style="left:1320px;top:871.5px;width:108px;font-weight:bold;color:#444">13.45</div>
<div class="num" style="left:1433px;top:871.5px;width:109px;font-weight:bold;color:#444">0.00</div>
<div class="num" style="left:1547px;top:871.5px;width:118px;font-weight:bold;color:#444">463.46</div>
<div class="num" style="left:1670px;top:871.5px;width:112px;font-weight:bold;color:#444">2 016.99</div>
<div class="a" style="left:1787px;top:864px;width:41px;height:34px;overflow:hidden"><div class="num" style="left:0;top:7.5px;width:97px;font-weight:bold;color:#444">21 880.00</div></div>
<div class="vl" style="left:591px;top:864px;height:34px;background:#e8e8e8"></div>
<div class="vl" style="left:737px;top:864px;height:34px;background:#e8e8e8"></div>
<div class="vl" style="left:860px;top:864px;height:34px;background:#e8e8e8"></div>
<div class="vl" style="left:977px;top:864px;height:34px;background:#e8e8e8"></div>
<div class="vl" style="left:1090px;top:864px;height:34px;background:#e8e8e8"></div>
<div class="vl" style="left:1206px;top:864px;height:34px;background:#e8e8e8"></div>
<div class="vl" style="left:1320px;top:864px;height:34px;background:#e8e8e8"></div>
<div class="vl" style="left:1433px;top:864px;height:34px;background:#e8e8e8"></div>
<div class="vl" style="left:1547px;top:864px;height:34px;background:#e8e8e8"></div>
<div class="vl" style="left:1670px;top:864px;height:34px;background:#e8e8e8"></div>
<div class="vl" style="left:1787px;top:864px;height:34px;background:#e8e8e8"></div>
<div class="a" style="left:253px;top:898px;width:404px;height:11px;border-radius:6px;background:#c9c9c9"></div>
<div class="a" style="left:1829px;top:107px;width:10px;height:498px;border-radius:5px;background:#c9c9c9"></div>
<div class="a" style="left:1207px;top:257px;width:355px;height:164px;background:#fff;border-radius:6px;box-shadow:0 2px 10px rgba(0,0,0,.22)"></div>
<svg class="a" style="left:1217.5px;top:248.5px" width="23" height="10" viewBox="0 0 23 10"><path d="M0 9.5 L11.5 0.5 L23 9.5Z" fill="#fff"/></svg>
<div class="t" style="left:1256px;top:277.5px;font-size:14.7px;color:#333;-webkit-text-stroke:0.35px #333">Rikki Crean</div>
<div class="t" style="left:1255px;top:304.5px;font-size:15.5px;color:#444;line-height:18px">Please, provide additional information<br>about this value</div>
<div class="t" style="left:1255px;top:348px;font-size:12.7px;color:#666">30.12.2022, 14:04:50</div>
<div class="a" style="left:1221px;top:375px;width:266px;height:31px;border:1px solid #a5a5a5;border-radius:2px;background:#fff"></div>
<div class="t" style="left:1228px;top:380px;font-size:13.5px;color:#9a9a9a">Add comment</div>

<div class="rb" style="top:308.5px"></div>
<div class="rb" style="top:367.5px"></div>
<div class="rb" style="top:484.5px"></div>
<div class="rb" style="top:542.5px"></div>
<div class="rb" style="top:601.5px"></div>
<div class="a" style="left:1864px;top:423px;width:48px;height:48px;border-radius:50%;border:2.5px solid #c8232c;background:#fff"></div>
<div class="a" style="left:1868.5px;top:427.5px;width:39px;height:39px;border-radius:50%;background:#224a7f"></div>
<svg class="a" style="left:1872px;top:315px" width="32" height="32" viewBox="0 0 24 24"><path fill="#fff" d="M6.62 10.79c1.44 2.83 3.76 5.14 6.59 6.59l2.2-2.2c.27-.27.67-.36 1.02-.24 1.12.37 2.33.57 3.57.57.55 0 1 .45 1 1V20c0 .55-.45 1-1 1-9.39 0-17-7.61-17-17 0-.55.45-1 1-1h3.5c.55 0 1 .45 1 1 0 1.25.2 2.45.57 3.57.11.35.03.74-.25 1.02l-2.2 2.2z"/></svg>
<svg class="a" style="left:1875px;top:379px" width="28" height="22" viewBox="0 0 28 22"><rect x="0.7" y="1.2" width="25.8" height="18.8" fill="#fff"/><path d="M1.5 1.8 L13.6 12.3 L25.7 1.8" fill="none" stroke="#224a7f" stroke-width="1.9"/></svg>
<svg class="a" style="left:1877px;top:436px" width="22" height="22" viewBox="0 0 22 22"><path fill="#fff" d="M1 1.6 H20 V14.5 H6.2 L2.2 18.8 V14.5 H1Z"/><circle cx="6.6" cy="8" r="1.1" fill="#224a7f"/><circle cx="10.5" cy="8" r="1.1" fill="#224a7f"/><circle cx="14.4" cy="8" r="1.1" fill="#224a7f"/></svg>
<svg class="a" style="left:1875px;top:496px" width="29" height="24" viewBox="0 0 29 24"><path fill="#fff" d="M1 1 H19 V14.5 H5.5 L2.3 17.5 V14.5 H1Z"/><path fill="#224a7f" d="M11.8 6 H28 V21 H26 V23.8 L23 21 H11.8Z"/><path fill="#fff" d="M13.3 7.5 H27 V19.5 H25 V22 L22.3 19.5 H13.3Z"/></svg>
<svg class="a" style="left:1876px;top:550px" width="26" height="29" viewBox="0 0 26 29"><path fill="#fff" d="M12.5 2.2 a1.4 1.4 0 0 1 1.4 1.4 V4.6 C18.2 5.6 19.6 9.5 19.6 13.5 V18.5 L23.7 22.8 V23.5 H1.7 V22.8 L5.8 18.5 V13.5 C5.8 9.5 7.2 5.6 11.1 4.6 V3.6 a1.4 1.4 0 0 1 1.4 -1.4Z"/><path fill="#fff" d="M9.5 25.3 H15.5 Q15 27.6 12.5 27.6 Q10 27.6 9.5 25.3Z"/></svg>
<svg class="a" style="left:1877px;top:611px" width="25" height="29" viewBox="0 0 25 29"><path fill="#fff" d="M2 1.3 H17.2 V19 L13 16.5 V26.6 H2Z"/><path d="M5.5 5.8h1.3M8 5.8h6.5M5.5 9.3h1.3M8 9.3h6.5M5.5 12.8h1.3M8 12.8h4" stroke="#224a7f" stroke-width="1.3"/><path fill="#224a7f" d="M12 14.8 L24 21.3 L12 28.6Z"/><path fill="#fff" d="M13.6 17.5 L22.3 21.3 L13.6 26.2Z"/></svg>
<div class="a" style="left:1862px;top:597px;width:20px;height:20px;border-radius:50%;background:#f24c13;color:#fff;font-size:14px;font-weight:bold;text-align:center;line-height:20px">1</div>
<svg class="a" style="left:1866.1999999999998px;top:14.800000000000004px" width="42.8" height="42.8" viewBox="0 0 42.8 42.8">
<defs><clipPath id="cpa"><circle cx="21.4" cy="21.4" r="21.4"/></clipPath><radialGradient id="ga" cx="0.45" cy="0.4" r="0.65"><stop offset="0" stop-color="#f7f8fa"/><stop offset="0.7" stop-color="#dde2e7"/><stop offset="1" stop-color="#c3cad2"/></radialGradient></defs>
<g clip-path="url(#cpa)">
<rect width="42.8" height="42.8" fill="url(#ga)"/>
<path d="M4 44 Q6 36 14 33.5 L30 33.5 Q37 36 39 44Z" fill="#efe2e6"/>
<path d="M14 30 L29 30 L28.5 44 L14.5 44Z" fill="#d4a293"/>
<ellipse cx="31.8" cy="19" rx="2.2" ry="3.8" fill="#c99080"/>
<path d="M10.4 14 Q10 8 20 7.5 Q31 8 31 14 L31 26 Q30 34.5 21 34.5 Q11.5 34.5 10.8 26Z" fill="#d59e8e"/>
<path d="M14 24 Q13 30 17 32 L12 30Z" fill="#c48878" opacity="0.6"/>
<path d="M8.9 15 Q8 5 15 3 Q22 0.8 28.5 3.5 Q33.5 6.5 31.8 16 Q30 11 27 10 Q21 12 15 11 Q11.5 12.5 10.6 15.5Z" fill="#8f6443"/>
<path d="M14 5.5 Q19 3.5 25 5 M16 8 Q21 6.5 27 8" stroke="#b0835c" stroke-width="0.9" fill="none"/>
<path d="M13.5 17.5 h3.3 M21.5 17.5 h3.3" stroke="#4d3a30" stroke-width="1.5"/>
<path d="M17 26.5 Q20 27.6 23.5 26.5" stroke="#a8675f" stroke-width="1.3" fill="none"/>
</g></svg>
<div class="a" style="left:1902.8px;top:10.6px;width:8.4px;height:8.4px;border-radius:50%;background:#ff4a13"></div>
<svg class="a" style="left:1872px;top:62px" width="32" height="32" viewBox="0 0 32 32"><g fill="#23a81e"><circle cx="16" cy="16" r="10"/><rect x="12.75" y="2" width="6.5" height="7" transform="rotate(0 16 16)"/><rect x="12.75" y="2" width="6.5" height="7" transform="rotate(45 16 16)"/><rect x="12.75" y="2" width="6.5" height="7" transform="rotate(90 16 16)"/><rect x="12.75" y="2" width="6.5" height="7" transform="rotate(135 16 16)"/><rect x="12.75" y="2" width="6.5" height="7" transform="rotate(180 16 16)"/><rect x="12.75" y="2" width="6.5" height="7" transform="rotate(225 16 16)"/><rect x="12.75" y="2" width="6.5" height="7" transform="rotate(270 16 16)"/><rect x="12.75" y="2" width="6.5" height="7" transform="rotate(315 16 16)"/></g><circle cx="16" cy="16" r="4.2" fill="#e9ecee"/></svg>
<svg class="a" style="left:1871.2px;top:95.4px" width="33.6" height="33.6" viewBox="0 0 24 24"><circle cx="12" cy="12" r="10" fill="#23a81e"/><path fill="#fff" d="M13 19h-2v-2h2v2zm2.07-7.75l-.9.92C13.45 12.9 13 13.5 13 15h-2v-.5c0-1.1.45-2.1 1.17-2.83l1.24-1.26c.37-.36.59-.86.59-1.41 0-1.1-.9-2-2-2s-2 .9-2 2H8c0-2.21 1.79-4 4-4s4 1.79 4 4c0 .88-.36 1.68-.93 2.25z"/></svg>
<svg class="a" style="left:1720px;top:10px" width="130" height="50" viewBox="1720 10 130 50">
<path d="M1752.3 31.6 A10.3 10.6 0 1 0 1752.3 46.8" fill="none" stroke="#ee4d22" stroke-width="3.3"/>
<path d="M1755.5 51 V32.3 M1755.6 38 Q1757 33.6 1763.3 33.6" fill="none" stroke="#ee4d22" stroke-width="3.3"/>
<path d="M1765 41.6 H1779.3 A7.6 7.6 0 1 0 1777.8 46.6" fill="none" stroke="#ee4d22" stroke-width="3.2"/>
<circle cx="1791.6" cy="41.6" r="7.7" fill="none" stroke="#ee4d22" stroke-width="3.2"/>
<path d="M1799.6 32.3 V51" stroke="#ee4d22" stroke-width="3.2"/>
<path d="M1805.2 28 V51 M1805 33.8 H1810" stroke="#ee4d22" stroke-width="2.6"/>
<path d="M1815.6 32.3 V51" stroke="#ee4d22" stroke-width="2.6"/>
<circle cx="1827" cy="41.6" r="7.5" fill="none" stroke="#ee4d22" stroke-width="3.2"/>
<path d="M1798.5 19.6 L1822.3 27.2 L1811.2 29.8 L1814.8 26.5Z" fill="#1d3a78"/>
</svg>
<svg class="a" style="left:1221px;top:272px" width="28" height="28" viewBox="0 0 42.8 42.8">
<defs><clipPath id="cpb"><circle cx="21.4" cy="21.4" r="21.4"/></clipPath><radialGradient id="gb" cx="0.45" cy="0.4" r="0.65"><stop offset="0" stop-color="#f7f8fa"/><stop offset="0.7" stop-color="#dde2e7"/><stop offset="1" stop-color="#c3cad2"/></radialGradient></defs>
<g clip-path="url(#cpb)">
<rect width="42.8" height="42.8" fill="url(#gb)"/>
<path d="M4 44 Q6 36 14 33.5 L30 33.5 Q37 36 39 44Z" fill="#efe2e6"/>
<path d="M14 30 L29 30 L28.5 44 L14.5 44Z" fill="#d4a293"/>
<ellipse cx="31.8" cy="19" rx="2.2" ry="3.8" fill="#c99080"/>
<path d="M10.4 14 Q10 8 20 7.5 Q31 8 31 14 L31 26 Q30 34.5 21 34.5 Q11.5 34.5 10.8 26Z" fill="#d59e8e"/>
<path d="M14 24 Q13 30 17 32 L12 30Z" fill="#c48878" opacity="0.6"/>
<path d="M8.9 15 Q8 5 15 3 Q22 0.8 28.5 3.5 Q33.5 6.5 31.8 16 Q30 11 27 10 Q21 12 15 11 Q11.5 12.5 10.6 15.5Z" fill="#8f6443"/>
<path d="M14 5.5 Q19 3.5 25 5 M16 8 Q21 6.5 27 8" stroke="#b0835c" stroke-width="0.9" fill="none"/>
<path d="M13.5 17.5 h3.3 M21.5 17.5 h3.3" stroke="#4d3a30" stroke-width="1.5"/>
<path d="M17 26.5 Q20 27.6 23.5 26.5" stroke="#a8675f" stroke-width="1.3" fill="none"/>
</g></svg>
<svg class="a" style="left:1492.7px;top:375.6px" width="27.4" height="27.4" viewBox="0 0 24 24"><path fill="#a9a9a9" d="M2.01 21L23 12 2.01 3 2 10l15 2-15 2z"/></svg>
<svg class="a" style="left:1524px;top:379px" width="20" height="20" viewBox="0 0 20 20"><path d="M2.6 2.6 L17.2 17.2 M17.2 2.6 L2.6 17.2" stroke="#222" stroke-width="2"/></svg>
<svg class="a" style="left:1474px;top:394px" width="12" height="12" viewBox="0 0 12 12"><path d="M3 10.5 L10.5 3 M7 10.5 L10.5 7" stroke="#666" stroke-width="1"/></svg>
<svg class="a" style="left:1312px;top:211px" width="8" height="8" viewBox="0 0 8 8"><path d="M0 0H8V8Z" fill="#e8121b"/></svg>
</body></html>
